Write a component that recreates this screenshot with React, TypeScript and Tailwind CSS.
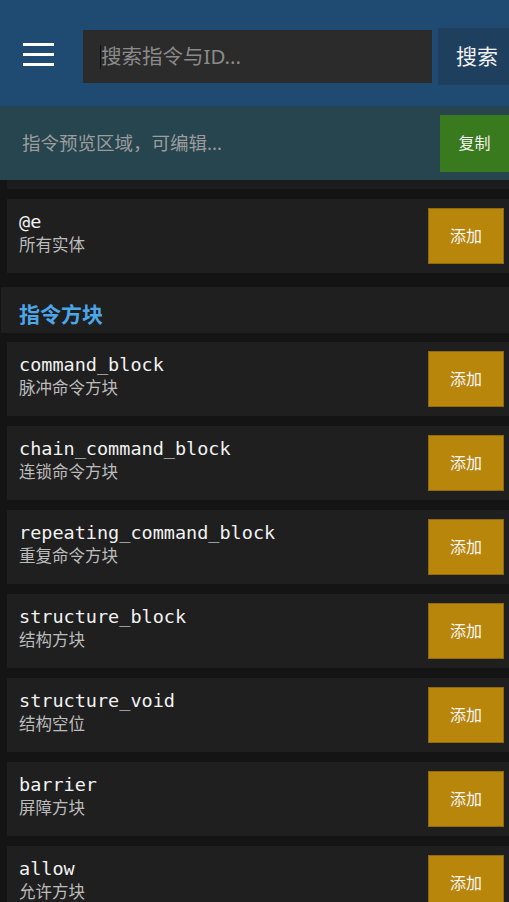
import React from 'react';

const mono = { fontFamily: '"DejaVu Sans Mono", "Noto Sans CJK SC", monospace' };

interface Item {
  id: string;
  name: string;
}

const selectors: Item[] = [{ id: '@e', name: '所有实体' }];

const blocks: Item[] = [
  { id: 'command_block', name: '脉冲命令方块' },
  { id: 'chain_command_block', name: '连锁命令方块' },
  { id: 'repeating_command_block', name: '重复命令方块' },
  { id: 'structure_block', name: '结构方块' },
  { id: 'structure_void', name: '结构空位' },
  { id: 'barrier', name: '屏障方块' },
  { id: 'allow', name: '允许方块' },
];

const ItemCard: React.FC<{ item: Item; className?: string }> = ({ item, className = '' }) => (
  <div className={`ml-[7px] h-[74px] bg-[#1f1f1f] flex items-center ${className}`}>
    <div className="flex-1 self-start pt-[11px] pl-[12px]">
      <div className="text-[18.5px] leading-[24px] text-[#f2f2f2]" style={mono}>
        {item.id}
      </div>
      <div className="text-[16.5px] leading-[22px] text-[#bcbcbc]">{item.name}</div>
    </div>
    <button
      type="button"
      className="w-[76px] h-[56px] mr-[5px] bg-[#b8860b] border border-[#8f6a10] text-[16px] text-[#f5f5f5]"
    >
      添加
    </button>
  </div>
);

export default function App() {
  return (
    <div
      className="w-[509px] min-h-[902px] bg-[#141414] overflow-hidden"
      style={{ fontFamily: '"Noto Sans", "Noto Sans CJK SC", sans-serif' }}
    >
      {/* top bar */}
      <div className="h-[106px] bg-[#1f4a72] flex items-center pt-[7px]">
        <div className="ml-[23px] -mt-[4px] w-[31px] flex flex-col gap-[7px]">
          <span className="block h-[3px] bg-white" />
          <span className="block h-[3px] bg-white" />
          <span className="block h-[3px] bg-white" />
        </div>
        <div className="ml-[29px] w-[349px] h-[53px] bg-[#2b2b2b] flex items-center pl-[17px]">
          <span className="w-px h-[24px] bg-[#111]" />
          <span className="text-[20.5px] text-[#8a8a8a]">搜索指令与ID...</span>
        </div>
        <button
          type="button"
          className="ml-[6px] flex-1 h-[57px] bg-[#1f3f5e] text-[21px] text-[#f2f2f2] text-left pl-[18px]"
        >
          搜索
        </button>
      </div>

      {/* preview */}
      <div className="h-[74px] bg-[#26454f] flex items-center">
        <span className="flex-1 pl-[22px] text-[18.5px] text-[#9c9c9c]">指令预览区域，可编辑...</span>
        <button type="button" className="w-[69px] h-[57px] bg-[#3a7a1f] text-[16px] text-[#f2f2f2]">
          复制
        </button>
      </div>

      {/* list */}
      <div className="ml-[7px] h-[9px] bg-[#1c1c1c]" />
      <div className="mt-[10px]">
        {selectors.map((s) => (
          <ItemCard key={s.id} item={s} />
        ))}
      </div>

      <div className="mt-[14px] ml-[1px] h-[46px] bg-[#1f1f1f] pl-[18px] pt-[14px]">
        <span className="text-[21px] leading-[26px] font-bold text-[#4da6e8]">指令方块</span>
      </div>

      <div className="mt-[9px] flex flex-col gap-[10px]">
        {blocks.map((b) => (
          <ItemCard key={b.id} item={b} />
        ))}
      </div>
    </div>
  );
}
